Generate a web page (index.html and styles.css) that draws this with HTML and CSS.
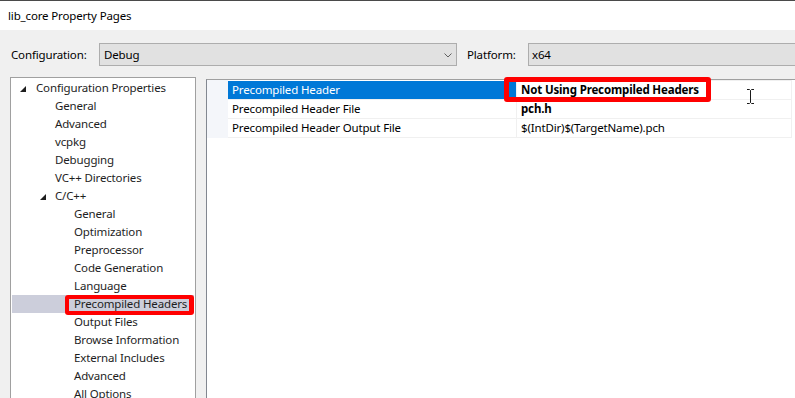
FILE: index.html
```html
<!DOCTYPE html>
<html>
<head>
<meta charset="utf-8">
<title>lib_core Property Pages</title>
<link rel="stylesheet" href="styles.css">
</head>
<body>
<div class="window">
  <div class="titlebar">lib_core Property Pages</div>
  <div class="content">
    <div class="config-row">
      <span class="lbl lbl-config">Configuration:</span>
      <div class="combo combo-config">
        <span>Debug</span>
        <svg class="chevron" width="8" height="5" viewBox="0 0 8 5"><path d="M0.5 0.5 L4 4 L7.5 0.5" fill="none" stroke="#606060" stroke-width="1"/></svg>
      </div>
      <span class="lbl lbl-platform">Platform:</span>
      <div class="combo combo-platform"><span>x64</span></div>
    </div>
    <div class="main">
      <div class="tree">
        <div class="node l0"><svg class="tri" width="6" height="6" viewBox="0 0 6 6"><polygon points="6,0 6,6 0,6" fill="#1e1e1e"/></svg><span>Configuration Properties</span></div>
        <div class="node l1"><span>General</span></div>
        <div class="node l1"><span>Advanced</span></div>
        <div class="node l1"><span>vcpkg</span></div>
        <div class="node l1"><span>Debugging</span></div>
        <div class="node l1"><span>VC++ Directories</span></div>
        <div class="node l1 has-tri"><svg class="tri" width="6" height="6" viewBox="0 0 6 6"><polygon points="6,0 6,6 0,6" fill="#1e1e1e"/></svg><span>C/C++</span></div>
        <div class="node l2"><span>General</span></div>
        <div class="node l2"><span>Optimization</span></div>
        <div class="node l2"><span>Preprocessor</span></div>
        <div class="node l2"><span>Code Generation</span></div>
        <div class="node l2"><span>Language</span></div>
        <div class="node l2 selected"><span>Precompiled Headers</span></div>
        <div class="node l2"><span>Output Files</span></div>
        <div class="node l2"><span>Browse Information</span></div>
        <div class="node l2"><span>External Includes</span></div>
        <div class="node l2"><span>Advanced</span></div>
        <div class="node l2"><span>All Options</span></div>
      </div>
      <div class="grid">
        <div class="prow active">
          <div class="gutter"></div>
          <div class="pname">Precompiled Header</div>
          <div class="pvalue bold">Not Using Precompiled Headers</div>
        </div>
        <div class="prow">
          <div class="gutter"></div>
          <div class="pname">Precompiled Header File</div>
          <div class="pvalue bold">pch.h</div>
        </div>
        <div class="prow last">
          <div class="gutter"></div>
          <div class="pname">Precompiled Header Output File</div>
          <div class="pvalue">$(IntDir)$(TargetName).pch</div>
        </div>
      </div>
    </div>
  </div>
  <div class="mark mark-value"></div>
  <div class="mark mark-tree"></div>
  <svg class="ibeam" width="7" height="15" viewBox="0 0 7 15"><path d="M0 0.5 H2.5 L3.5 1.5 L4.5 0.5 H7 M3.5 1.5 V13.5 M0 14.5 H2.5 L3.5 13.5 L4.5 14.5 H7" fill="none" stroke="#1a1a1a" stroke-width="1"/></svg>
</div>
</body>
</html>
```
FILE: styles.css
```css
html, body {
  margin: 0;
  padding: 0;
  width: 795px;
  height: 398px;
  overflow: hidden;
  background: #f0f0f0;
}

.window {
  position: relative;
  width: 795px;
  height: 398px;
  overflow: hidden;
  border-top: 1px solid #4a4a4a;
  box-sizing: border-box;
  font-family: "Noto Sans", "Segoe UI", sans-serif;
  font-size: 11.5px;
  letter-spacing: -0.15px;
  color: #000;
}

.titlebar {
  height: 29px;
  line-height: 29px;
  padding-left: 8px;
  background: #fff;
  color: #000;
}

.content {
  background: #f0f0f0;
  height: 368px;
}

.config-row {
  display: flex;
  align-items: center;
  padding-top: 13px;
  height: 23px;
}

.lbl {
  flex: none;
  line-height: 23px;
}

.lbl-config {
  margin-left: 11px;
  width: 88px;
}

.lbl-platform {
  margin-left: 10px;
  width: 61px;
}

.combo {
  flex: none;
  height: 23px;
  box-sizing: border-box;
  border: 1px solid #adadad;
  background: #e1e1e1;
  display: flex;
  align-items: center;
  line-height: 21px;
}

.combo-config {
  width: 358px;
  padding-left: 4px;
  padding-right: 4px;
  justify-content: space-between;
}

.combo-platform {
  width: 280px;
  padding-left: 3px;
}

.chevron {
  display: block;
  margin-top: 1px;
}

.main {
  display: flex;
  align-items: flex-start;
  margin-top: 11px;
  padding-left: 10px;
}

.tree {
  flex: none;
  width: 186px;
  height: 330px;
  box-sizing: border-box;
  border: 1px solid #a0a0a0;
  background: #fff;
  padding: 1px 1px 0 1px;
}

.node {
  position: relative;
  height: 18px;
  line-height: 18px;
  white-space: nowrap;
  color: #1e1e1e;
}

.node .tri {
  position: absolute;
  top: 7px;
}

.l0 { padding-left: 24px; }
.l0 .tri { left: 8px; }
.l1 { padding-left: 43px; }
.has-tri .tri { left: 28px; }
.l2 { padding-left: 62px; }

.node.selected {
  background: #cccedb;
}

.grid {
  flex: none;
  margin-left: 10px;
  margin-top: 2px;
  width: 600px;
  height: 330px;
  box-sizing: border-box;
  border-left: 1px solid #828790;
  border-top: 1px solid #a0a0a0;
  background: #fff;
}

.prow {
  display: flex;
  height: 19px;
}

.gutter {
  flex: none;
  width: 21px;
  background: #f4f6fa;
}

.pname {
  flex: none;
  width: 289px;
  box-sizing: border-box;
  border-top: 1px solid #f0f0f0;
  border-right: 1px solid #f0f0f0;
  padding-left: 4px;
  line-height: 18px;
  white-space: nowrap;
}

.pvalue {
  flex: none;
  width: 275px;
  box-sizing: border-box;
  border-top: 1px solid #f0f0f0;
  border-right: 1px solid #f0f0f0;
  padding-left: 4px;
  line-height: 18px;
  white-space: nowrap;
}

.prow.last .pname,
.prow.last .pvalue {
  border-bottom: 1px solid #f0f0f0;
  height: 20px;
}

.prow.last { height: 20px; }

.prow.active .pname {
  background: #0078d7;
  color: #fff;
  border-top-color: #fff;
}

.bold { font-weight: bold; }

.mark {
  position: absolute;
  box-sizing: border-box;
  border: 5px solid #ff0000;
  border-radius: 3px;
}

.mark-value {
  left: 504px;
  top: 76px;
  width: 207px;
  height: 25px;
}

.mark-tree {
  left: 65px;
  top: 294px;
  width: 129px;
  height: 20px;
  border-width: 4px 5px 4px 4px;
}

.ibeam {
  position: absolute;
  left: 747px;
  top: 88px;
}
```
